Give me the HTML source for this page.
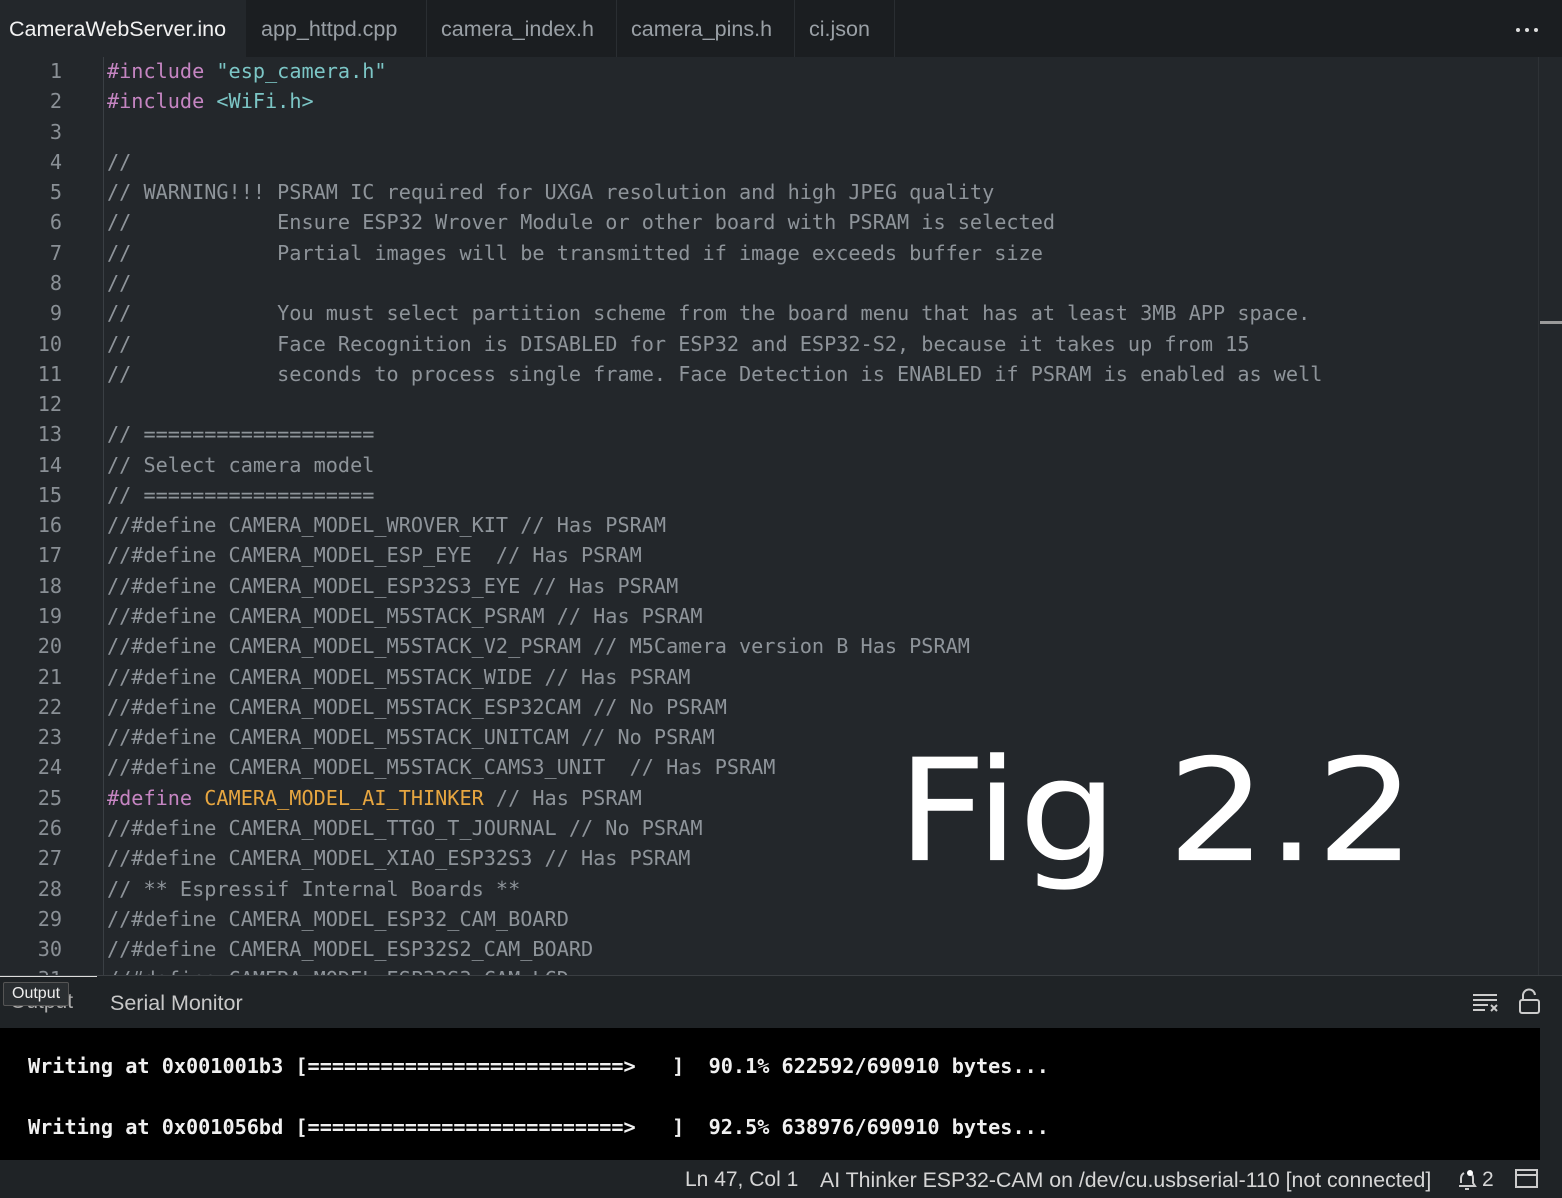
<!DOCTYPE html>
<html><head><meta charset="utf-8"><style>
*{margin:0;padding:0;box-sizing:border-box}
body{width:1562px;height:1198px;background:#23272b;overflow:hidden;position:relative;font-family:"Liberation Sans",sans-serif}
.tabs{position:absolute;left:0;top:0;width:1562px;height:57px;background:#1b1e21}
.tab{position:absolute;top:0;height:57px;line-height:59px;font-size:21.5px;color:#9aa0a6}
.tab.act{background:#23272b;color:#f2f2f2}
.sep{position:absolute;top:0;width:1px;height:57px;background:#2a2e32}
.code{position:absolute;left:0;top:57px;font-family:"DejaVu Sans Mono","Liberation Mono",monospace;font-size:20.2px;color:#8e949a}
.ln{position:absolute;width:62px;text-align:right;color:#8a9096}
.tx{position:absolute;left:107px;white-space:pre}
.k{color:#c585c2}.s{color:#7cc6c6}.m{color:#e7a640}
.gut{position:absolute;left:103px;top:57px;width:1px;height:918px;background:#3a3f44}
.vsb{position:absolute;left:1538px;top:57px;width:1px;height:918px;background:#2e3236}
.panel{position:absolute;left:0;top:975px;width:1562px;height:53px;background:#1f2326;border-top:1px solid #3a3e42}
.out{position:absolute;left:0;top:1028px;width:1540px;height:132px;background:#000;font-family:"DejaVu Sans Mono","Liberation Mono",monospace;font-size:20.2px;color:#f0f0f0;font-weight:bold}
.status{position:absolute;left:0;top:1160px;width:1562px;height:38px;background:#1f2326;color:#d6d6d6;font-size:21px}
</style></head><body>
<div class="tabs">
<div class="tab act" style="left:0;width:246px;padding-left:9px">CameraWebServer.ino</div>
<div class="tab" style="left:261px">app_httpd.cpp</div>
<div class="sep" style="left:426px"></div>
<div class="tab" style="left:441px">camera_index.h</div>
<div class="sep" style="left:616px"></div>
<div class="tab" style="left:631px">camera_pins.h</div>
<div class="sep" style="left:794px"></div>
<div class="tab" style="left:809px">ci.json</div>
<div class="sep" style="left:894px"></div>
<div style="position:absolute;left:1516px;top:28px;width:24px;height:4px">
<span style="position:absolute;left:0;width:4px;height:4px;border-radius:2px;background:#ddd"></span>
<span style="position:absolute;left:9px;width:4px;height:4px;border-radius:2px;background:#ddd"></span>
<span style="position:absolute;left:18px;width:4px;height:4px;border-radius:2px;background:#ddd"></span></div>
</div>
<div class="gut"></div><div class="vsb"></div>
<div style="position:absolute;left:1540px;top:321px;width:22px;height:3px;background:#9a9a9a"></div>
<div class="code" id="c"></div>
<div style="position:absolute;left:897px;top:740px;font-family:'DejaVu Sans',sans-serif;font-size:156px;color:#fff;line-height:1;white-space:pre;transform:scaleY(0.91);transform-origin:0 0">Fig 2.2</div>
<div class="panel">
<div style="position:absolute;left:0;top:-1px;width:97px;height:2px;background:#ddd"></div>
<div style="position:absolute;left:10px;top:14px;font-size:21px;color:#aaa">Output</div>
<div style="position:absolute;left:3px;top:6px;padding:2px 8px;font-size:16px;color:#eee;background:#2a2e31;border:1px solid #555;border-radius:2px">Output</div>
<div style="position:absolute;left:110px;top:15px;font-size:21.5px;color:#c8c8c8">Serial Monitor</div>
<svg style="position:absolute;left:1472px;top:16px" width="28" height="22" viewBox="0 0 28 22" fill="none" stroke="#ccc" stroke-width="2"><path d="M1 3h24M1 8h24M1 13h15M1 18h12M19 13l6 6M25 13l-6 6"/></svg>
<svg style="position:absolute;left:1518px;top:12px" width="24" height="28" viewBox="0 0 24 28" fill="none" stroke="#ccc" stroke-width="2"><path d="M5 12V8a6 6 0 0 1 12-1"/><rect x="2" y="12" width="19" height="13" rx="2"/></svg>
</div>
<div class="out">
<div style="position:absolute;left:28px;top:26px;white-space:pre">Writing at 0x001001b3 [==========================>   ]  90.1% 622592/690910 bytes...</div>
<div style="position:absolute;left:28px;top:87px;white-space:pre">Writing at 0x001056bd [==========================>   ]  92.5% 638976/690910 bytes...</div>
</div>
<div style="position:absolute;left:1540px;top:1028px;width:22px;height:132px;background:#1f2326"></div>
<div class="status">
<div style="position:absolute;left:685px;top:8px;white-space:pre">Ln 47, Col 1</div>
<div style="position:absolute;left:820px;top:8px;white-space:pre;font-size:21.3px">AI Thinker ESP32-CAM on /dev/cu.usbserial-110 [not connected]</div>
<svg style="position:absolute;left:1455px;top:8px" width="24" height="24" viewBox="0 0 24 24" fill="none" stroke="#ccc" stroke-width="2"><path d="M4 18h16l-2-3v-5a6 6 0 0 0-5-6M10 21h4M6 15V10a6 6 0 0 1 3-5"/><circle cx="15" cy="5" r="3" fill="#fff" stroke="none"/></svg>
<div style="position:absolute;left:1482px;top:8px">2</div>
<svg style="position:absolute;left:1515px;top:9px" width="24" height="20" viewBox="0 0 24 20" fill="none" stroke="#ccc" stroke-width="2"><rect x="1" y="1" width="21" height="17"/><path d="M1 6h21"/></svg>
</div>
<script>
var L=[
'<span class="k">#include</span> <span class="s">"esp_camera.h"</span>',
'<span class="k">#include</span> <span class="s">&lt;WiFi.h&gt;</span>',
'',
'//',
'// WARNING!!! PSRAM IC required for UXGA resolution and high JPEG quality',
'//            Ensure ESP32 Wrover Module or other board with PSRAM is selected',
'//            Partial images will be transmitted if image exceeds buffer size',
'//',
'//            You must select partition scheme from the board menu that has at least 3MB APP space.',
'//            Face Recognition is DISABLED for ESP32 and ESP32-S2, because it takes up from 15',
'//            seconds to process single frame. Face Detection is ENABLED if PSRAM is enabled as well',
'',
'// ===================',
'// Select camera model',
'// ===================',
'//#define CAMERA_MODEL_WROVER_KIT // Has PSRAM',
'//#define CAMERA_MODEL_ESP_EYE  // Has PSRAM',
'//#define CAMERA_MODEL_ESP32S3_EYE // Has PSRAM',
'//#define CAMERA_MODEL_M5STACK_PSRAM // Has PSRAM',
'//#define CAMERA_MODEL_M5STACK_V2_PSRAM // M5Camera version B Has PSRAM',
'//#define CAMERA_MODEL_M5STACK_WIDE // Has PSRAM',
'//#define CAMERA_MODEL_M5STACK_ESP32CAM // No PSRAM',
'//#define CAMERA_MODEL_M5STACK_UNITCAM // No PSRAM',
'//#define CAMERA_MODEL_M5STACK_CAMS3_UNIT  // Has PSRAM',
'<span class="k">#define</span> <span class="m">CAMERA_MODEL_AI_THINKER</span> // Has PSRAM',
'//#define CAMERA_MODEL_TTGO_T_JOURNAL // No PSRAM',
'//#define CAMERA_MODEL_XIAO_ESP32S3 // Has PSRAM',
'// ** Espressif Internal Boards **',
'//#define CAMERA_MODEL_ESP32_CAM_BOARD',
'//#define CAMERA_MODEL_ESP32S2_CAM_BOARD',
'//#define CAMERA_MODEL_ESP32S3_CAM_LCD'];
var h='';
for(var i=0;i<L.length;i++){var t=2+i*30.28;h+='<div class="ln" style="top:'+t+'px">'+(i+1)+'</div><div class="tx" style="top:'+t+'px">'+L[i]+'</div>';}
document.getElementById('c').innerHTML=h;
</script>
<div style="position:absolute;left:0;top:975px;width:1562px;height:1px;background:#3a3e42"></div>
</body></html>
